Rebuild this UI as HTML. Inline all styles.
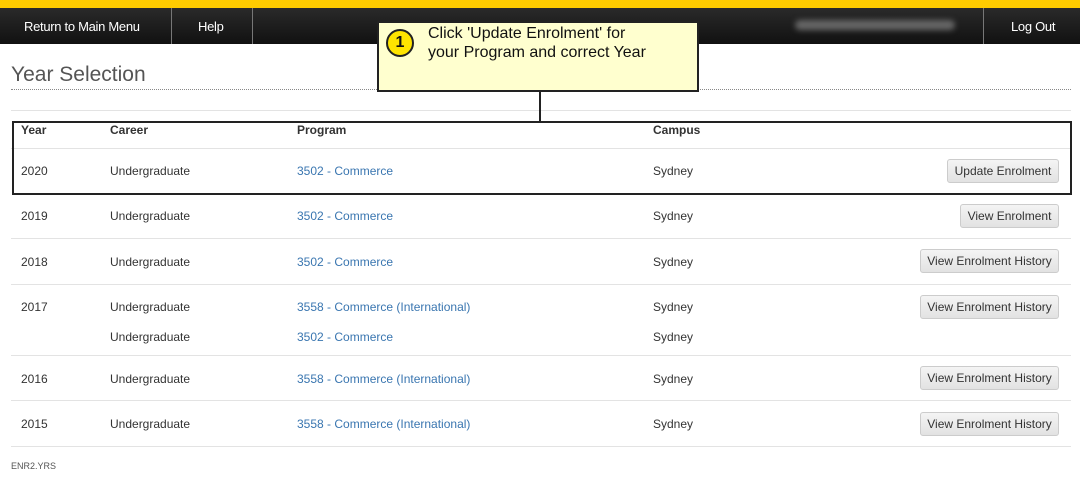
<!DOCTYPE html><html><head><style>
body{margin:0;width:1080px;height:500px;background:#fff;font-family:"Liberation Sans",sans-serif;position:relative;overflow:hidden;font-size:12px;color:#333}
.a{position:absolute}
.nav{top:8px;left:0;width:1080px;height:36px;background:linear-gradient(#2a2a2a,#111)}
.nt{color:#fff;font-size:13px;top:19px;letter-spacing:-.3px}
.sep{top:8px;width:1px;height:36px;background:#777}
.hl{left:11px;width:1060px;height:1px;background:#e3e3e3}
.btn{background:linear-gradient(#f4f4f4,#e2e2e2);border:1px solid #ccc;border-radius:3px;color:#333;font-size:12px;height:22px;line-height:22px;text-align:center}
.lk{color:#3a76b0}
</style></head><body>
<div class="a" style="top:0;left:0;width:1080px;height:8px;background:#fc0"></div>
<div class="a nav"></div>
<div class="a nt" style="left:24px">Return to Main Menu</div>
<div class="a sep" style="left:171px"></div>
<div class="a nt" style="left:198px">Help</div>
<div class="a sep" style="left:252px"></div>
<div class="a" style="left:795px;top:20px;width:160px;height:10px;background:#666;border-radius:5px;filter:blur(3px)"></div>
<div class="a sep" style="left:983px"></div>
<div class="a nt" style="left:1011px">Log Out</div>
<div class="a" style="left:11px;top:63px;font-size:21px;color:#555">Year Selection</div>
<div class="a" style="left:11px;top:89px;width:1060px;border-top:1px dotted #888"></div>
<div class="a hl" style="top:110px"></div>
<div class="a hl" style="top:148px"></div>
<div class="a hl" style="top:238px"></div>
<div class="a hl" style="top:284px"></div>
<div class="a hl" style="top:355px"></div>
<div class="a hl" style="top:400px"></div>
<div class="a hl" style="top:446px"></div>
<div class="a" style="left:21px;top:123px;font-weight:bold">Year</div>
<div class="a" style="left:110px;top:123px;font-weight:bold">Career</div>
<div class="a" style="left:297px;top:123px;font-weight:bold">Program</div>
<div class="a" style="left:653px;top:123px;font-weight:bold">Campus</div>

<div class="a" style="left:21px;top:164px">2020</div><div class="a" style="left:110px;top:164px">Undergraduate</div><div class="a lk" style="left:297px;top:164px">3502 - Commerce</div><div class="a" style="left:653px;top:164px">Sydney</div>
<div class="a btn" style="left:947px;top:159px;width:110px">Update Enrolment</div>

<div class="a" style="left:21px;top:209px">2019</div><div class="a" style="left:110px;top:209px">Undergraduate</div><div class="a lk" style="left:297px;top:209px">3502 - Commerce</div><div class="a" style="left:653px;top:209px">Sydney</div>
<div class="a btn" style="left:960px;top:204px;width:97px">View Enrolment</div>

<div class="a" style="left:21px;top:255px">2018</div><div class="a" style="left:110px;top:255px">Undergraduate</div><div class="a lk" style="left:297px;top:255px">3502 - Commerce</div><div class="a" style="left:653px;top:255px">Sydney</div>
<div class="a btn" style="left:920px;top:249px;width:137px">View Enrolment History</div>

<div class="a" style="left:21px;top:300px">2017</div><div class="a" style="left:110px;top:300px">Undergraduate</div><div class="a lk" style="left:297px;top:300px">3558 - Commerce (International)</div><div class="a" style="left:653px;top:300px">Sydney</div>
<div class="a btn" style="left:920px;top:295px;width:137px">View Enrolment History</div>
<div class="a" style="left:110px;top:330px">Undergraduate</div><div class="a lk" style="left:297px;top:330px">3502 - Commerce</div><div class="a" style="left:653px;top:330px">Sydney</div>

<div class="a" style="left:21px;top:372px">2016</div><div class="a" style="left:110px;top:372px">Undergraduate</div><div class="a lk" style="left:297px;top:372px">3558 - Commerce (International)</div><div class="a" style="left:653px;top:372px">Sydney</div>
<div class="a btn" style="left:920px;top:366px;width:137px">View Enrolment History</div>

<div class="a" style="left:21px;top:417px">2015</div><div class="a" style="left:110px;top:417px">Undergraduate</div><div class="a lk" style="left:297px;top:417px">3558 - Commerce (International)</div><div class="a" style="left:653px;top:417px">Sydney</div>
<div class="a btn" style="left:920px;top:412px;width:137px">View Enrolment History</div>

<div class="a" style="left:11px;top:461px;font-size:9px;color:#555">ENR2.YRS</div>

<div class="a" style="left:12px;top:121px;width:1056px;height:70px;border:2px solid #222"></div>
<div class="a" style="left:539px;top:90px;width:2px;height:32px;background:#222"></div>
<div class="a" style="left:377px;top:21px;width:318px;height:67px;background:#ffffcf;border:2px solid #222"></div>
<div class="a" style="left:386px;top:29px;width:24px;height:24px;border-radius:50%;background:#ffe400;border:2px solid #222;text-align:center;line-height:24px;font-size:16px;font-weight:bold;color:#111">1</div>
<div class="a" style="left:428px;top:24px;font-size:16px;color:#111;line-height:19px">Click 'Update Enrolment' for<br>your Program and correct Year</div>
</body></html>
